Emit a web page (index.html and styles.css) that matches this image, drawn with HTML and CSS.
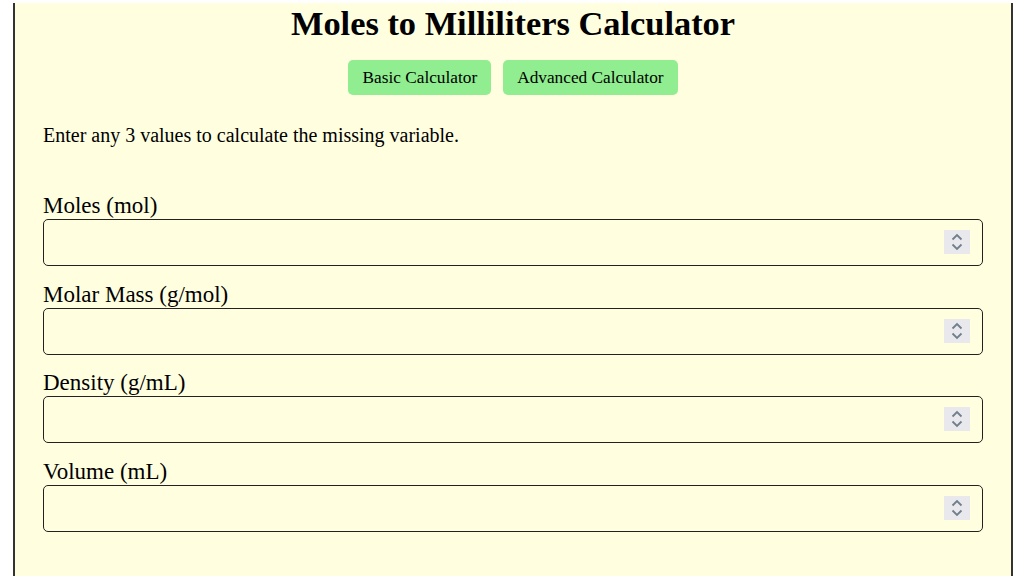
FILE: index.html
```html
<!DOCTYPE html>
<html lang="en">
  <head>
    <meta charset="UTF-8" />
    <meta name="viewport" content="width=device-width, initial-scale=1.0" />
    <title>Moles to Milliliters Calculator</title>
    <link rel="stylesheet" href="styles.css">
  </head>
  <body>
    <div class="container">
      <h1>Moles to Milliliters Calculator</h1>

      <div class="tabs">
        <button class="tab-btn">Basic Calculator</button>
        <button class="tab-btn">Advanced Calculator</button>
      </div>

      <p class="hint">Enter any 3 values to calculate the missing variable.</p>

      <!-- Inputs -->
      <div class="fields">
        <div class="field">
          <label for="moles">Moles (mol)</label>
          <div class="input-wrap">
            <input type="number" id="moles" />
            <svg class="spin" width="26" height="24" viewBox="0 0 26 24"><rect width="26" height="24" fill="#e9e9ed"/><polyline points="8.5,9.5 13,5 17.5,9.5" fill="none" stroke="#6f7f8c" stroke-width="1.8"/><polyline points="8.5,14.5 13,19 17.5,14.5" fill="none" stroke="#6f7f8c" stroke-width="1.8"/></svg>
          </div>
        </div>

        <div class="field">
          <label for="molarMass">Molar Mass (g/mol)</label>
          <div class="input-wrap">
            <input type="number" id="molarMass" />
            <svg class="spin" width="26" height="24" viewBox="0 0 26 24"><rect width="26" height="24" fill="#e9e9ed"/><polyline points="8.5,9.5 13,5 17.5,9.5" fill="none" stroke="#6f7f8c" stroke-width="1.8"/><polyline points="8.5,14.5 13,19 17.5,14.5" fill="none" stroke="#6f7f8c" stroke-width="1.8"/></svg>
          </div>
        </div>

        <div class="field">
          <label for="density">Density (g/mL)</label>
          <div class="input-wrap">
            <input type="number" id="density" />
            <svg class="spin" width="26" height="24" viewBox="0 0 26 24"><rect width="26" height="24" fill="#e9e9ed"/><polyline points="8.5,9.5 13,5 17.5,9.5" fill="none" stroke="#6f7f8c" stroke-width="1.8"/><polyline points="8.5,14.5 13,19 17.5,14.5" fill="none" stroke="#6f7f8c" stroke-width="1.8"/></svg>
          </div>
        </div>

        <div class="field">
          <label for="volume">Volume (mL)</label>
          <div class="input-wrap">
            <input type="number" id="volume" />
            <svg class="spin" width="26" height="24" viewBox="0 0 26 24"><rect width="26" height="24" fill="#e9e9ed"/><polyline points="8.5,9.5 13,5 17.5,9.5" fill="none" stroke="#6f7f8c" stroke-width="1.8"/><polyline points="8.5,14.5 13,19 17.5,14.5" fill="none" stroke="#6f7f8c" stroke-width="1.8"/></svg>
          </div>
        </div>
      </div>
    </div>
  </body>
</html>
```

FILE: styles.css
```css
/* General Styling */
* {
  box-sizing: border-box;
}

body {
  margin: 0;
  background-color: #fff;
  font-family: "Liberation Serif", "Times New Roman", serif;
  color: #000;
}

.container {
  width: 1000px;
  margin: 0 11px 0 13px;
  background-color: #ffffe0;
  border: 2px solid #333;
  border-top: none;
  padding: 0 28px 46px;
}

h1 {
  font-size: 34.4px;
  line-height: 40px;
  text-align: center;
  margin: 3px 0 0;
}

.tabs {
  display: flex;
  justify-content: center;
  gap: 12px;
  margin-top: 17px;
}

.tab-btn {
  font-family: inherit;
  font-size: 17.3px;
  line-height: 19px;
  padding: 8px 14px;
  background-color: #90ee90;
  color: #000;
  border: none;
  border-radius: 5px;
  cursor: pointer;
}

.hint {
  font-size: 20px;
  line-height: 24px;
  margin: 28px 0 0;
}

.fields {
  display: flex;
  flex-direction: column;
  gap: 15.5px;
  margin-top: 46px;
}

.field label {
  display: block;
  font-size: 23px;
  line-height: 26px;
}

.input-wrap {
  position: relative;
}

.input-wrap input {
  display: block;
  width: 100%;
  height: 47px;
  padding: 0 12px;
  font-family: inherit;
  font-size: 18px;
  background: transparent;
  border: 1px solid #222;
  border-radius: 5px;
  -moz-appearance: textfield;
}

.input-wrap input::-webkit-inner-spin-button,
.input-wrap input::-webkit-outer-spin-button {
  -webkit-appearance: none;
  margin: 0;
}

.spin {
  position: absolute;
  right: 13px;
  top: 11px;
  pointer-events: none;
}
```
